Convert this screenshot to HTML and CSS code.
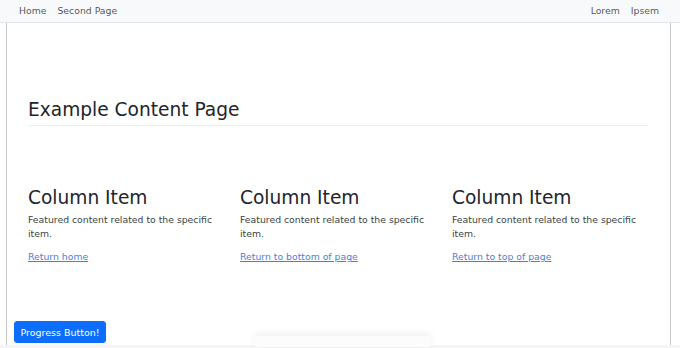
FILE: index.html
```html
<!DOCTYPE html>
<html lang="en">
<head>
    <meta charset="UTF-8">
    <meta name="viewport" content="width=device-width, initial-scale=1.0">
    <title>Example Content Page</title>
    <link rel="stylesheet" href="styles.css">
</head>
<body>
    <nav class="navbar">
        <div class="nav-left">
            <a href="#" class="nav-link">Home</a>
            <a href="#" class="nav-link">Second Page</a>
        </div>
        <div class="nav-right">
            <a href="#" class="nav-link">Lorem</a>
            <a href="#" class="nav-link">Ipsem</a>
        </div>
    </nav>

    <main class="page">
        <h1 class="page-title">Example Content Page</h1>

        <div class="columns">
            <div class="col">
                <h2 class="col-title">Column Item</h2>
                <p class="col-text">Featured content related to the specific item.</p>
                <p class="col-text"><a href="#" class="col-link">Return home</a></p>
            </div>
            <div class="col">
                <h2 class="col-title">Column Item</h2>
                <p class="col-text">Featured content related to the specific item.</p>
                <p class="col-text"><a href="#" class="col-link">Return to bottom of page</a></p>
            </div>
            <div class="col">
                <h2 class="col-title">Column Item</h2>
                <p class="col-text">Featured content related to the specific item.</p>
                <p class="col-text"><a href="#" class="col-link">Return to top of page</a></p>
            </div>
        </div>
    </main>

    <footer class="footer"></footer>

    <div class="toast-shadow"></div>
    <button class="progress-btn">Progress Button!</button>
</body>
</html>
```

FILE: styles.css
```css
body{
    margin: 0;
    font-family: "DejaVu Sans", sans-serif;
    font-size: 9.3px;
    line-height: 1.5;
    color: #212529;
    background: #fff;
}

.navbar{
    height: 23px;
    box-sizing: border-box;
    display: flex;
    justify-content: space-between;
    align-items: center;
    padding: 0 21px 0 19px;
    background: #f8f9fa;
    border-bottom: 1px solid #e3e6e9;
}
.nav-left, .nav-right{
    display: flex;
    gap: 11px;
}
.nav-link{
    font-size: 9.3px;
    color: rgba(0, 0, 0, 0.7);
    text-decoration: none;
}

.page{
    margin: 0 9px 0 6px;
    height: 322px;
    box-sizing: border-box;
    padding: 76px 22px 0 21px;
    border-left: 1px solid #c8c8c8;
    border-right: 1px solid #c8c8c8;
}
.page-title{
    margin: 0 0 61px 0;
    padding-bottom: 4px;
    font-size: 18.6px;
    font-weight: 400;
    line-height: 1.2;
    border-bottom: 1px solid #eceef0;
}

.columns{
    display: grid;
    grid-template-columns: repeat(3, 1fr);
    gap: 16px;
}
.col-title{
    margin: 0 0 3.5px 0;
    font-size: 18.6px;
    font-weight: 400;
    line-height: 1.2;
}
.col-text{
    margin: 0 0 9px 0;
    color: #3a3f44;
}
.col-link{
    color: #4a7fd8;
}

.footer{
    height: 3px;
    background: #f4f5f6;
}

.toast-shadow{
    position: fixed;
    left: 255px;
    bottom: 1px;
    width: 175px;
    height: 11px;
    background: #fcfcfc;
    box-shadow: 0 -2px 8px rgba(0, 0, 0, 0.07);
}

.progress-btn{
    position: fixed;
    left: 14px;
    bottom: 5px;
    width: 92px;
    height: 22px;
    padding: 0;
    border: 1px solid #0d6efd;
    border-radius: 3px;
    background: #0d6efd;
    color: #fff;
    font-family: "DejaVu Sans", sans-serif;
    font-size: 9.5px;
}
```
